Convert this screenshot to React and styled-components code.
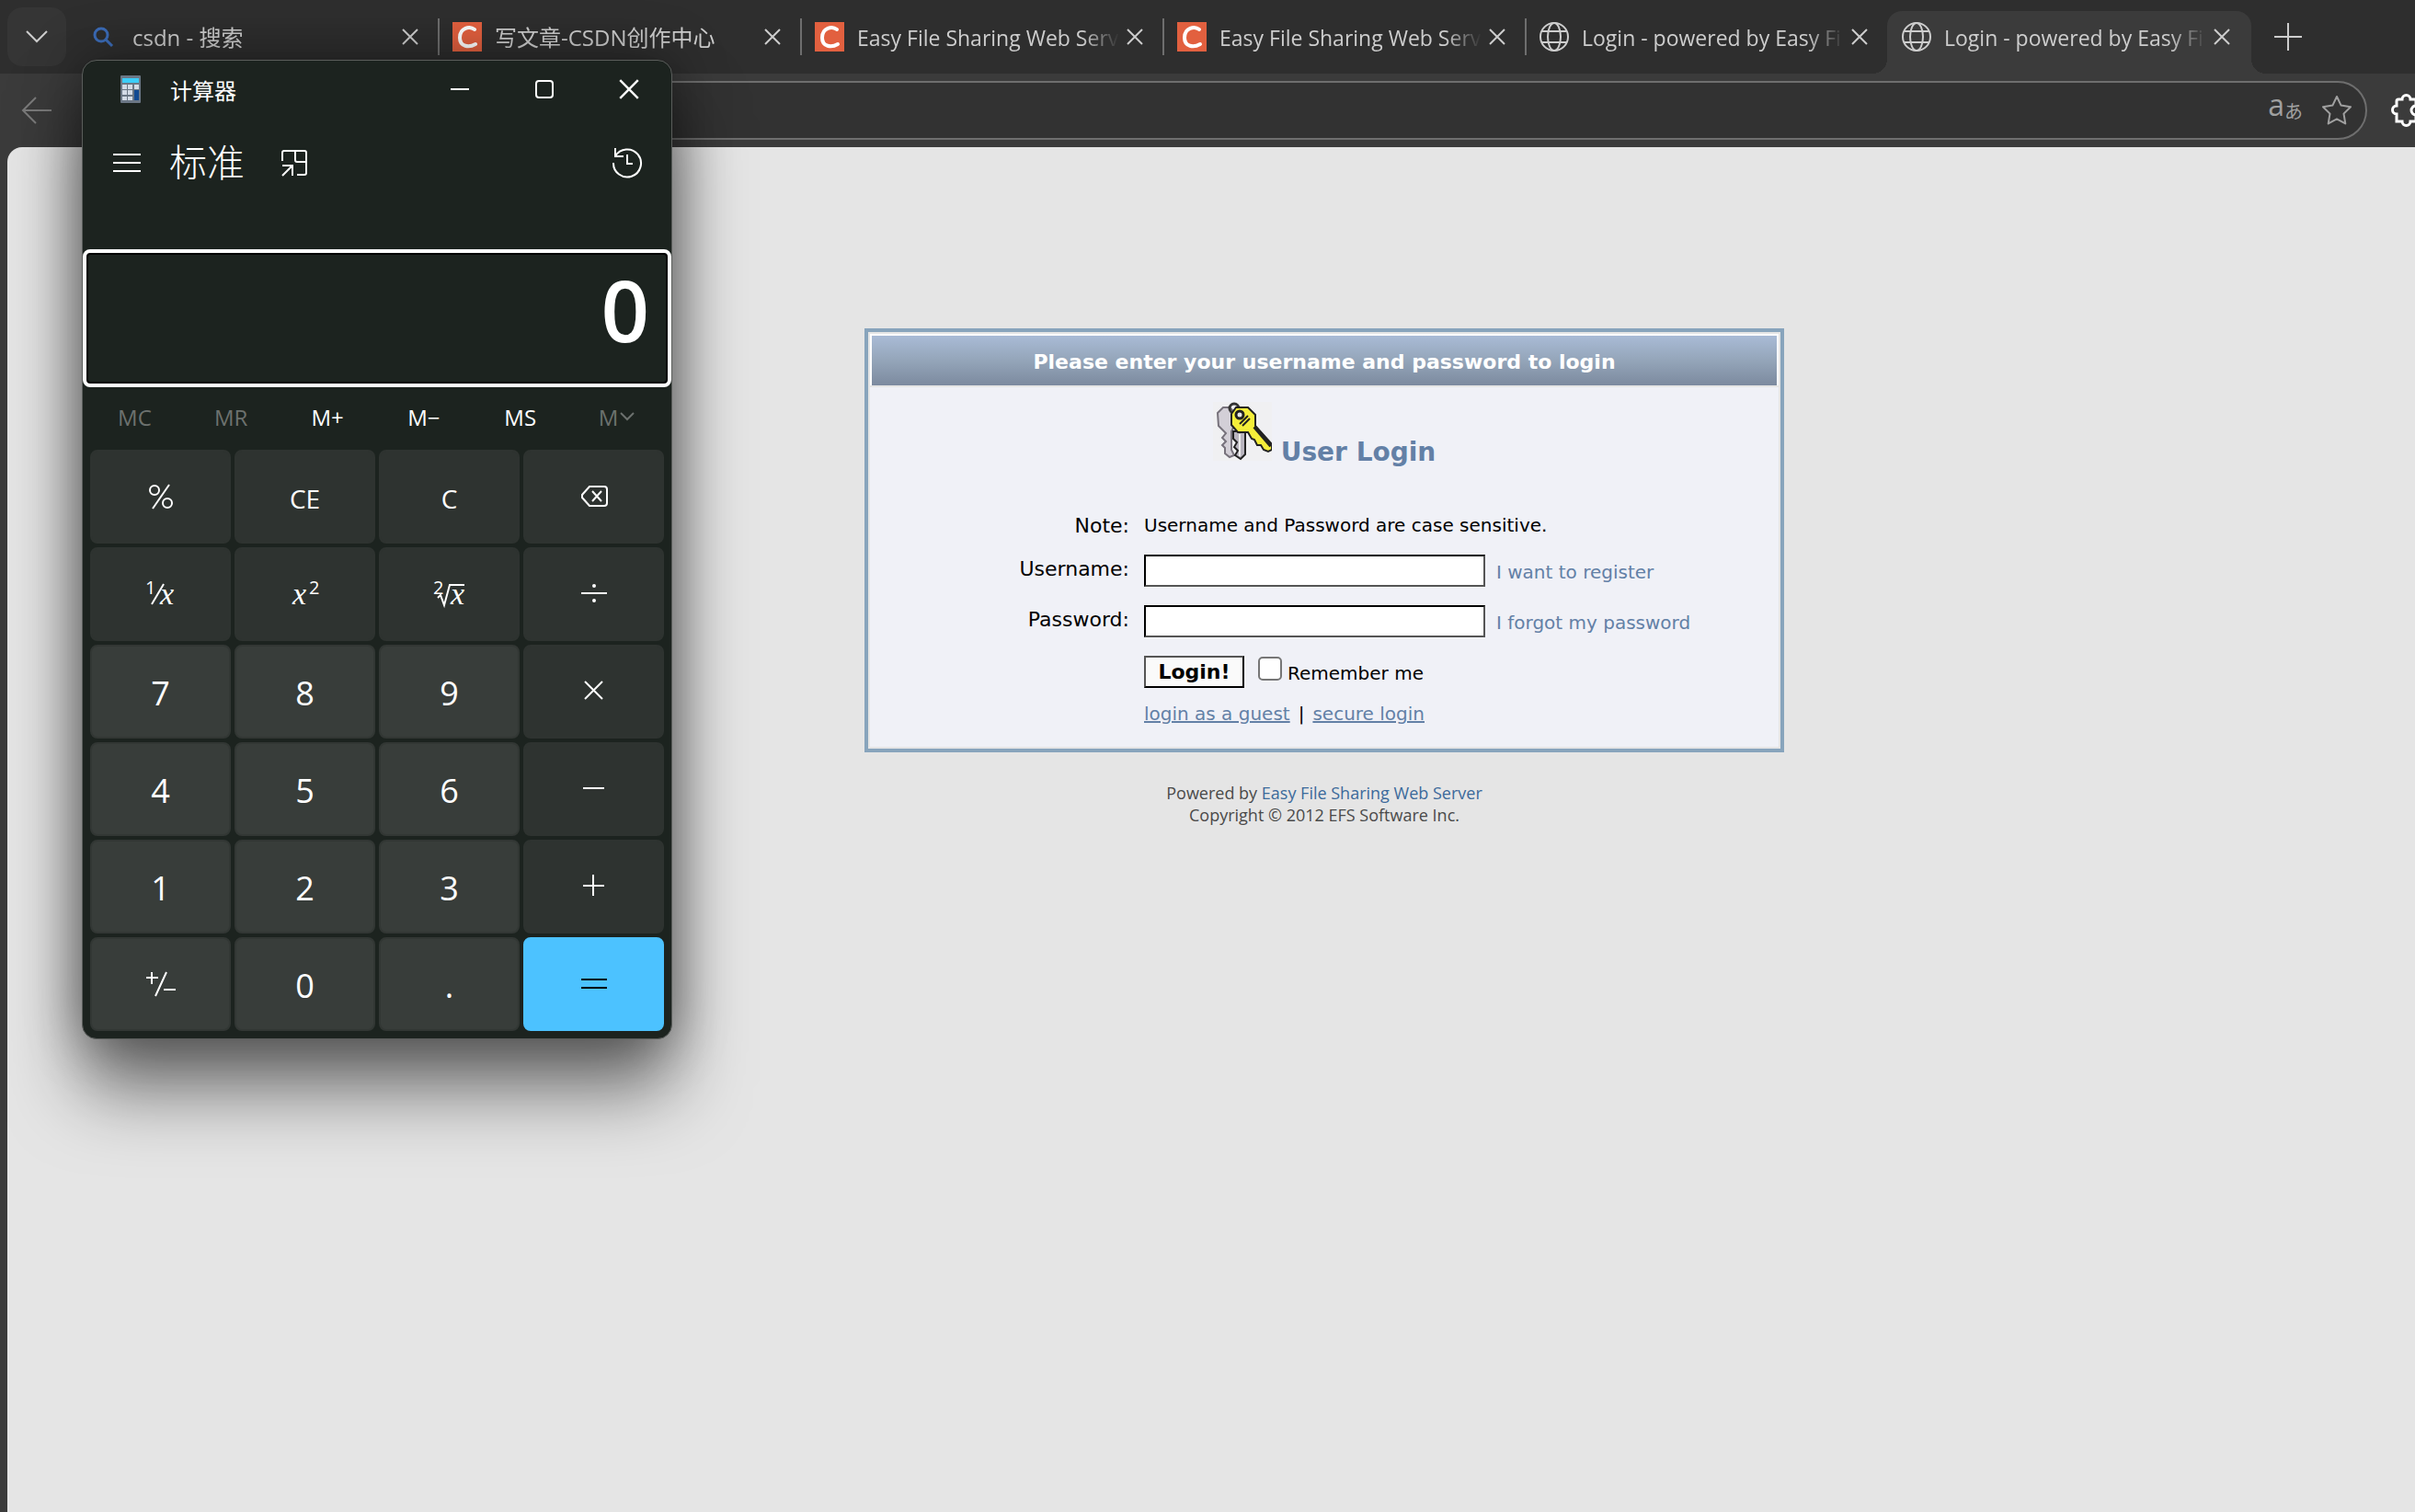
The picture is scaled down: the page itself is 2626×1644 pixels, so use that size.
import styled, { createGlobalStyle } from "styled-components";

const App = () => {
  return (
    <Screen>
      <GlobalStyle />
      <Browser>
        <TabStrip>
          <TabMenu type="button" aria-label="Tab actions">
            <svg width="26" height="16" viewBox="0 0 26 16" {...line}>
              <path d="M2 2 L13 13 L24 2" />
            </svg>
          </TabMenu>
          {tabs.map((tab, i) => (
            <Tab key={i} $active={tab.active} $last={i > 3}>
              <TabIcon>{tabIcons[tab.icon]}</TabIcon>
              <TabTitle $cjk={tab.cjk}>{tab.title}</TabTitle>
              <PlainButton type="button" aria-label="Close tab">
                <Cross size={18} />
              </PlainButton>
            </Tab>
          ))}
          <NewTab type="button" aria-label="New tab">
            <svg width="32" height="32" viewBox="0 0 32 32" {...line}>
              <path d="M1 16 H31 M16 1 V31" />
            </svg>
          </NewTab>
        </TabStrip>
        <Toolbar>
          <BackButton type="button" aria-label="Back">
            <svg width="34" height="30" viewBox="0 0 34 30" {...line}>
              <path d="M16 1 L2 15 L16 29 M2 15 H33" />
            </svg>
          </BackButton>
          <AddressBar>
            <Translate>
              a<small>あ</small>
            </Translate>
            <svg width="34" height="34" viewBox="0 0 34 34" {...line}>
              <path
                d="M17 2 L21.6 11.6 L32 13.2 L24.5 20.6 L26.3 31.4 L17 26.3 L7.7 31.4 L9.5 20.6 L2 13.2 L12.4 11.6 Z"
                strokeLinejoin="round"
              />
            </svg>
          </AddressBar>
          <Extensions type="button" aria-label="Extensions">
            <svg width="36" height="36" viewBox="0 0 36 36" {...line} strokeWidth="3">
              <path d="M8 6 H12 A4.5 4.5 0 0 1 21 6 H27 V13 A5 5 0 1 0 27 23 V30 H21 A4.5 4.5 0 0 1 12 30 H6 V22 A4.5 4.5 0 0 1 6 13 V8 Q6 6 8 6 Z" />
            </svg>
          </Extensions>
        </Toolbar>
        <Page>
          <LoginBox>
            <LoginHeader>
              Please enter your username and password to login
            </LoginHeader>
            <LoginBody>
              <LoginTitle>
                <Keys />
                User Login
              </LoginTitle>
              <Form onSubmit={(e) => e.preventDefault()}>
                <Row>
                  <Label as="span">Note:</Label>
                  <span>Username and Password are case sensitive.</span>
                </Row>
                <Row $height={55}>
                  <Label htmlFor="username">Username:</Label>
                  <TextInput id="username" type="text" />
                  <SideLink href="#register">I want to register</SideLink>
                </Row>
                <Row $height={55}>
                  <Label htmlFor="password">Password:</Label>
                  <TextInput id="password" type="password" />
                  <SideLink href="#forgot">I forgot my password</SideLink>
                </Row>
                <Row $height={55}>
                  <Label as="span" />
                  <LoginButton type="submit">Login!</LoginButton>
                  <Checkbox id="remember" type="checkbox" />
                  <Remember htmlFor="remember">Remember me</Remember>
                </Row>
                <Row $height={36}>
                  <Label as="span" />
                  <Alternatives>
                    <a href="#guest">login as a guest</a>
                    <span>|</span>
                    <a href="#secure">secure login</a>
                  </Alternatives>
                </Row>
              </Form>
            </LoginBody>
          </LoginBox>
          <Footer>
            Powered by <a href="#efs">Easy File Sharing Web Server</a>
            <br />
            Copyright © 2012 EFS Software Inc.
          </Footer>
        </Page>
      </Browser>
      <Calculator />
    </Screen>
  );
};

const line = {
  fill: "none",
  stroke: "currentColor",
  strokeWidth: 2,
};

const Cross = ({ size }) => (
  <svg width={size} height={size} viewBox="0 0 18 18" {...line}>
    <path d="M1 1 L17 17 M17 1 L1 17" />
  </svg>
);

const Globe = () => (
  <svg width="32" height="32" viewBox="0 0 32 32" {...line}>
    <circle cx="16" cy="16" r="15" />
    <ellipse cx="16" cy="16" rx="7" ry="15" />
    <path d="M2.5 10 H29.5 M2.5 22 H29.5" />
  </svg>
);

const Search = () => (
  <svg width="32" height="32" viewBox="0 0 32 32" fill="none" stroke="#3c6cb8" strokeWidth="3">
    <circle cx="12" cy="14" r="7" />
    <path d="M17 19 L24 26" />
  </svg>
);

const Csdn = () => (
  <svg width="32" height="32" viewBox="0 0 32 32" fill="none">
    <rect width="32" height="32" fill="#e2603f" />
    <path
      d="M24 8 C19 4 8 6 8 17 C8 27 18 28 25 24"
      stroke="#fff"
      strokeWidth="4"
      strokeLinecap="round"
    />
  </svg>
);

const Keys = () => (
  <svg width="64" height="64" viewBox="0 0 64 64" aria-hidden="true">
    <rect width="64" height="64" fill="#f0f0f2" />
    <g stroke="#222" strokeWidth="2">
      <path
        d="M5 12 L11 6 H18 L24 12 V24 L20 32 V52 L23 58 L18 60 L13 56 V50 L10 47 L14 43 L10 39 L14 34 L6 26 Z"
        fill="#d3cfd7"
        stroke="#77727c"
      />
      <path
        d="M22 32 H35 V57 L30 62 L24 58 L27 53 L23 49 L26 44 L22 40 Z"
        fill="#b9b5bf"
      />
      <path d="M29 35 V59" stroke="#eee" />
      <circle cx="23" cy="7" r="5" fill="none" stroke="#333" strokeWidth="3" />
      <path
        d="M25 6 H38 L46 14 V26 L64 46 V52 L60 54 L55 52 L52 47 H48 L45 41 L42 40 L38 33 H27 L20 25 V13 Z"
        fill="#f5ee3a"
      />
      <path d="M45 27 L63 48" strokeWidth="4" />
      <circle cx="29" cy="14" r="4" fill="#e8e8e8" strokeWidth="3" />
      <path d="M29 24 L38 15 M32 26 L40 18" />
    </g>
  </svg>
);

const tabIcons = { search: <Search />, csdn: <Csdn />, globe: <Globe /> };

const tabs = [
  { icon: "search", title: "csdn - 搜索", cjk: true },
  { icon: "csdn", title: "写文章-CSDN创作中心", cjk: true },
  { icon: "csdn", title: "Easy File Sharing Web Serv" },
  { icon: "csdn", title: "Easy File Sharing Web Serv" },
  { icon: "globe", title: "Login - powered by Easy Fi" },
  { icon: "globe", title: "Login - powered by Easy Fi", active: true },
];

const Glyph = ({ children }) => (
  <svg width="40" height="40" viewBox="0 0 40 40" {...line}>
    {children}
  </svg>
);

const X = (props) => (
  <text
    {...props}
    fill="currentColor"
    stroke="none"
    fontFamily="Liberation Serif, serif"
    fontStyle="italic"
    fontSize="34"
  >
    x
  </text>
);

const Small = ({ children, ...props }) => (
  <text {...props} fill="currentColor" stroke="none" fontSize="20">
    {children}
  </text>
);

const keys = [
  {
    name: "percent",
    kind: "op",
    face: (
      <Glyph>
        <circle cx="13" cy="13" r="5" />
        <circle cx="27" cy="27" r="5" />
        <path d="M29 7 L11 33" />
      </Glyph>
    ),
  },
  { name: "clear entry", kind: "op", text: "CE" },
  { name: "clear", kind: "op", text: "C" },
  {
    name: "backspace",
    kind: "op",
    face: (
      <Glyph>
        <path d="M15 9 H31 Q34 9 34 12 V27 Q34 30 31 30 H15 L7 21 V18 Z" />
        <path d="M18 14 L28 25 M28 14 L18 25" />
      </Glyph>
    ),
  },
  {
    name: "reciprocal",
    kind: "op",
    face: (
      <Glyph>
        <Small x="3" y="20">1</Small>
        <path d="M23 9 L10 31" />
        <X x="19" y="31" />
      </Glyph>
    ),
  },
  {
    name: "square",
    kind: "op",
    face: (
      <Glyph>
        <X x="6" y="31" />
        <Small x="24" y="20">2</Small>
      </Glyph>
    ),
  },
  {
    name: "square root",
    kind: "op",
    face: (
      <Glyph>
        <Small x="2" y="20">2</Small>
        <path d="M7 24 L10 21 L14 32 L20 10 H36" />
        <X x="21" y="31" />
      </Glyph>
    ),
  },
  {
    name: "divide",
    kind: "op",
    face: (
      <Glyph>
        <path d="M6 19 H34" />
        <circle cx="20" cy="11" r="1" />
        <circle cx="20" cy="27" r="1" />
      </Glyph>
    ),
  },
  { name: "7", text: "7" },
  { name: "8", text: "8" },
  { name: "9", text: "9" },
  {
    name: "multiply",
    kind: "op",
    face: (
      <Glyph>
        <path d="M10 9 L29 28 M29 9 L10 28" />
      </Glyph>
    ),
  },
  { name: "4", text: "4" },
  { name: "5", text: "5" },
  { name: "6", text: "6" },
  {
    name: "minus",
    kind: "op",
    face: (
      <Glyph>
        <path d="M8 19 H31" />
      </Glyph>
    ),
  },
  { name: "1", text: "1" },
  { name: "2", text: "2" },
  { name: "3", text: "3" },
  {
    name: "plus",
    kind: "op",
    face: (
      <Glyph>
        <path d="M8 19 H31 M19 7 V30" />
      </Glyph>
    ),
  },
  {
    name: "change sign",
    face: (
      <Glyph>
        <path d="M4 13 H17 M10 7 V20 M26 7 L14 33 M23 26 H36" />
      </Glyph>
    ),
  },
  { name: "0", text: "0" },
  { name: "decimal point", text: "." },
  {
    name: "equals",
    kind: "equals",
    face: (
      <Glyph>
        <path d="M6 15 H34 M6 24 H34" />
      </Glyph>
    ),
  },
];

const Calculator = () => (
  <CalcWindow>
    <CalcTitleBar>
      <svg width="22" height="30" viewBox="0 0 22 30" aria-hidden="true">
        <rect width="22" height="30" rx="1" fill="#6b7785" />
        <rect x="2" y="3" width="18" height="5" fill="#3ccdf8" />
        <g fill="#d3dbe6">
          <path d="M2 10 H7 V15 H2 Z M8 10 H13 V15 H8 Z M15 10 H20 V15 H15 Z" />
          <path d="M2 16 H7 V21 H2 Z M8 16 H13 V21 H8 Z" />
          <path d="M2 23 H7 V27 H2 Z M8 23 H13 V27 H8 Z" />
        </g>
        <rect x="15" y="16" width="5" height="11" fill="#124a92" />
      </svg>
      <CalcName>计算器</CalcName>
      <WindowButton type="button" aria-label="Minimize">
        <svg width="20" height="20" viewBox="0 0 20 20" {...line}>
          <path d="M0 10 H20" />
        </svg>
      </WindowButton>
      <WindowButton type="button" aria-label="Maximize">
        <svg width="20" height="20" viewBox="0 0 20 20" {...line}>
          <rect x="1" y="1" width="18" height="18" rx="3" />
        </svg>
      </WindowButton>
      <WindowButton type="button" aria-label="Close">
        <Cross size={22} />
      </WindowButton>
    </CalcTitleBar>
    <CalcNav>
      <PlainButton type="button" aria-label="Navigation">
        <svg width="30" height="24" viewBox="0 0 30 24" {...line}>
          <path d="M0 3 H30 M0 12 H30 M0 21 H30" />
        </svg>
      </PlainButton>
      <Mode>标准</Mode>
      <PlainButton type="button" aria-label="Keep on top">
        <svg width="30" height="30" viewBox="0 0 30 30" {...line}>
          <path d="M2 13 V4 Q2 2 4 2 H26 Q28 2 28 4 V26 Q28 28 26 28 H18" />
          <path d="M16 2 V12 Q16 14 18 14 H28 M2 29 L13 18 M2 18 H13 V29" />
        </svg>
      </PlainButton>
      <HistoryButton type="button" aria-label="History">
        <svg width="34" height="34" viewBox="0 0 34 34" {...line}>
          <path d="M4 1 V10 H13 M4 10 A15 15 0 1 1 2 17 M17 8 V18 H23" />
        </svg>
      </HistoryButton>
    </CalcNav>
    <Display>0</Display>
    <MemoryRow>
      <MemoryKey type="button" disabled>MC</MemoryKey>
      <MemoryKey type="button" disabled>MR</MemoryKey>
      <MemoryKey type="button">M+</MemoryKey>
      <MemoryKey type="button">M−</MemoryKey>
      <MemoryKey type="button">MS</MemoryKey>
      <MemoryKey type="button" disabled>
        M
        <svg width="16" height="10" viewBox="0 0 16 10" {...line}>
          <path d="M1 1 L8 8 L15 1" />
        </svg>
      </MemoryKey>
    </MemoryRow>
    <Keypad>
      {keys.map((key) => (
        <Key
          key={key.name}
          type="button"
          aria-label={key.name}
          $kind={key.kind}
          $text={key.text}
        >
          {key.text || key.face}
        </Key>
      ))}
    </Keypad>
  </CalcWindow>
);

const GlobalStyle = createGlobalStyle`
  * {
    box-sizing: border-box;
  }

  body {
    margin: 0;
    background: #3b3b3b;
  }

  svg {
    display: block;
    flex-shrink: 0;
  }
`;

const Screen = styled.div`
  position: relative;
  min-height: 100vh;
  overflow: hidden;
  display: flex;
  font-family: "Open Sans", "Noto Sans CJK SC", sans-serif;
`;

/* the browser window runs past the right edge of the screen */
const Browser = styled.div`
  flex: 0 0 calc(100% + 246px);
  display: flex;
  flex-direction: column;
`;

const PlainButton = styled.button`
  display: flex;
  align-items: center;
  justify-content: center;
  padding: 0;
  border: 0;
  background: none;
  color: inherit;
  font: inherit;
`;

const TabStrip = styled.div`
  display: flex;
  height: 80px;
  padding: 8px 8px 0;
  background: #2e2e2e;
  color: #cdcdcd;
`;

const TabMenu = styled(PlainButton)`
  width: 64px;
  height: 64px;
  margin-right: 12px;
  border-radius: 16px;
  background: #353535;
`;

const Tab = styled.div`
  position: relative;
  display: flex;
  align-items: center;
  width: ${(props) => (props.$active ? "396px" : "394px")};
  height: 68px;
  margin-top: 4px;
  margin-left: ${(props) => (props.$active ? "-2px" : "0")};
  padding: 0 23px 12px ${(props) => (props.$active ? "16px" : "14px")};
  border-radius: 16px 16px 0 0;
  background: ${(props) => (props.$active ? "#3b3b3b" : "none")};

  /* flared foot of the active tab */
  &::before {
    content: "";
    display: ${(props) => (props.$active ? "block" : "none")};
    position: absolute;
    left: -16px;
    right: -16px;
    bottom: 0;
    height: 16px;
    background:
      radial-gradient(circle at 0 0, transparent 16px, #3b3b3b 16px) left / 16px
        16px no-repeat,
      radial-gradient(circle at 100% 0, transparent 16px, #3b3b3b 16px) right /
        16px 16px no-repeat;
  }

  &::after {
    content: "";
    display: ${(props) => (props.$last ? "none" : "block")};
    position: absolute;
    right: 0;
    top: 8px;
    width: 2px;
    height: 40px;
    background: #6e6e6e;
  }
`;

const TabIcon = styled.span`
  width: 32px;
  height: 32px;
`;

const TabTitle = styled.span`
  flex: 1;
  margin: 0 8px 0 14px;
  padding-top: 2px;
  overflow: hidden;
  white-space: nowrap;
  font-size: ${(props) => (props.$cjk ? "24px" : "23px")};
  line-height: 32px;
  mask-image: linear-gradient(to right, #000 86%, transparent);
`;

const NewTab = styled(PlainButton)`
  width: 80px;
  height: 64px;
`;

const Toolbar = styled.div`
  display: flex;
  align-items: center;
  height: 80px;
  background: #3b3b3b;
`;

const BackButton = styled(PlainButton)`
  width: 80px;
  height: 64px;
  margin-right: 16px;
  color: #7b7b7b;
`;

const AddressBar = styled.div`
  flex: 1;
  display: flex;
  align-items: center;
  justify-content: flex-end;
  gap: 20px;
  height: 64px;
  padding-right: 14px;
  border: 2px solid #6e6e6e;
  border-radius: 32px;
  background: #323232;
  color: #a0a0a0;
`;

const Translate = styled.span`
  display: flex;
  align-items: center;
  padding-bottom: 12px;
  font-size: 32px;
  line-height: 32px;

  small {
    margin-top: 16px;
    font-size: 20px;
  }
`;

const Extensions = styled(PlainButton)`
  justify-content: flex-start;
  width: 298px;
  padding-left: 26px;
  color: #fff;
`;

const Page = styled.main`
  flex: 1;
  display: flex;
  flex-direction: column;
  align-items: center;
  margin-left: 8px;
  padding-top: 197px;
  border-radius: 16px 0 0 0;
  background: #e5e5e5;
  font-family: "DejaVu Sans", Verdana, sans-serif;
  font-size: 20px;
  color: #000;
`;

const LoginBox = styled.section`
  width: 1000px;
  padding: 2px;
  border: 4px solid #88a4bc;
`;

const LoginHeader = styled.header`
  padding: 14px 0 10px;
  border: 2px solid #fff;
  border-bottom: 0;
  background: linear-gradient(#a9bbd6, #94a5b9 50%, #7c8a9f);
  background-clip: padding-box;
  color: #fff;
  font-size: 22px;
  font-weight: bold;
  line-height: 30px;
  text-align: center;
`;

const LoginBody = styled.div`
  margin-top: 2px;
  padding: 16px 0 18px;
  background: #f0f1f7;
`;

const LoginTitle = styled.h1`
  display: flex;
  align-items: baseline;
  justify-content: center;
  gap: 10px;
  height: 64px;
  margin: 0 0 48px;
  color: #6380a6;
  font-size: 28px;
  line-height: 26px;
`;

const Form = styled.form`
  display: flex;
  flex-direction: column;
`;

const Label = styled.label`
  width: 282px;
  margin-right: 16px;
  font-size: 22px;
  text-align: right;
`;

const Row = styled.div`
  display: flex;
  align-items: center;
  height: ${(props) => props.$height || 44}px;

  label${Label} {
    padding-bottom: 4px;
  }
`;

const TextInput = styled.input`
  width: 371px;
  height: 35px;
  margin-right: 12px;
  padding: 0 4px;
  border: 2px solid;
  border-color: #000 #555 #555 #000;
  background: #fff;
  font: inherit;
`;

const SideLink = styled.a`
  padding-top: 2px;
  color: #6380a6;
  text-decoration: none;
`;

const LoginButton = styled.button`
  width: 109px;
  height: 35px;
  margin-right: 15px;
  padding: 0;
  border: 2px solid;
  border-color: #555 #000 #000 #555;
  background: #fafafa;
  color: #000;
  font: inherit;
  font-size: 22px;
  font-weight: bold;
  line-height: 30px;
`;

const Checkbox = styled.input`
  appearance: none;
  width: 26px;
  height: 26px;
  margin: 0 6px 8px 0;
  border: 2px solid #767676;
  border-radius: 5px;
  background: #fff;
`;

const Remember = styled.label`
  padding-top: 2px;
`;

const Alternatives = styled.span`
  display: flex;
  gap: 9px;

  a {
    color: #6380a6;
    text-decoration: underline;
  }
`;

const Footer = styled.footer`
  margin-top: 32px;
  color: #4a4a4a;
  font-family: "Open Sans", sans-serif;
  font-size: 18px;
  line-height: 24px;
  text-align: center;

  a {
    color: #3c6a9b;
    text-decoration: none;
  }
`;

const CalcWindow = styled.section`
  position: absolute;
  left: 89px;
  top: 65px;
  width: 642px;
  border: 1px solid #5a5d5b;
  border-radius: 16px;
  background: #1c231f;
  color: #fff;
  box-shadow:
    0 0 60px rgba(0, 0, 0, 0.4),
    0 56px 80px rgba(0, 0, 0, 0.5);
`;

const CalcTitleBar = styled.div`
  display: flex;
  align-items: center;
  height: 62px;
  padding-left: 41px;
`;

const CalcName = styled.span`
  flex: 1;
  padding-left: 32px;
  font-size: 24px;
`;

const WindowButton = styled(PlainButton)`
  width: 92px;
  height: 62px;
`;

const CalcNav = styled.div`
  display: flex;
  align-items: center;
  height: 98px;
  margin-bottom: 45px;
  padding: 0 31px 0 33px;
`;

const Mode = styled.h2`
  margin: 0 39px 0 31px;
  padding-bottom: 2px;
  font-size: 41px;
  font-weight: 300;
  line-height: 60px;
`;

const HistoryButton = styled(PlainButton)`
  margin-left: auto;
`;

const Display = styled.output`
  display: block;
  height: 150px;
  padding: 0 20px;
  border: 4px solid #fff;
  border-radius: 8px;
  box-shadow: inset 0 0 0 2px #000;
  font-size: 92px;
  font-weight: 600;
  line-height: 124px;
  text-align: right;
`;

const MemoryRow = styled.div`
  display: grid;
  grid-template-columns: repeat(6, 1fr);
  height: 68px;
  padding: 0 7px 4px 4px;
`;

const MemoryKey = styled(PlainButton)`
  gap: 2px;
  color: #fff;
  font-size: 24px;

  &:disabled {
    color: #6c716e;
  }
`;

const Keypad = styled.div`
  display: grid;
  grid-template-columns: repeat(4, 1fr);
  gap: 4px;
  padding: 0 8px 8px;
`;

const keyColors = {
  op: "#2e3330",
  equals: "#4cc2ff",
};

/* letters on the clear keys are smaller than the digits */
const Key = styled(PlainButton)`
  height: 102px;
  padding-top: ${(props) => (props.$text ? "3px" : "0")};
  border: 2px solid ${(props) => keyColors[props.$kind] || "#323734"};
  border-radius: 8px;
  background: ${(props) => keyColors[props.$kind] || "#383d3a"};
  color: ${(props) => (props.$kind === "equals" ? "#000" : "#fff")};
  font-size: ${(props) => (props.$kind === "op" ? "28px" : "36px")};
`;

export default App;
